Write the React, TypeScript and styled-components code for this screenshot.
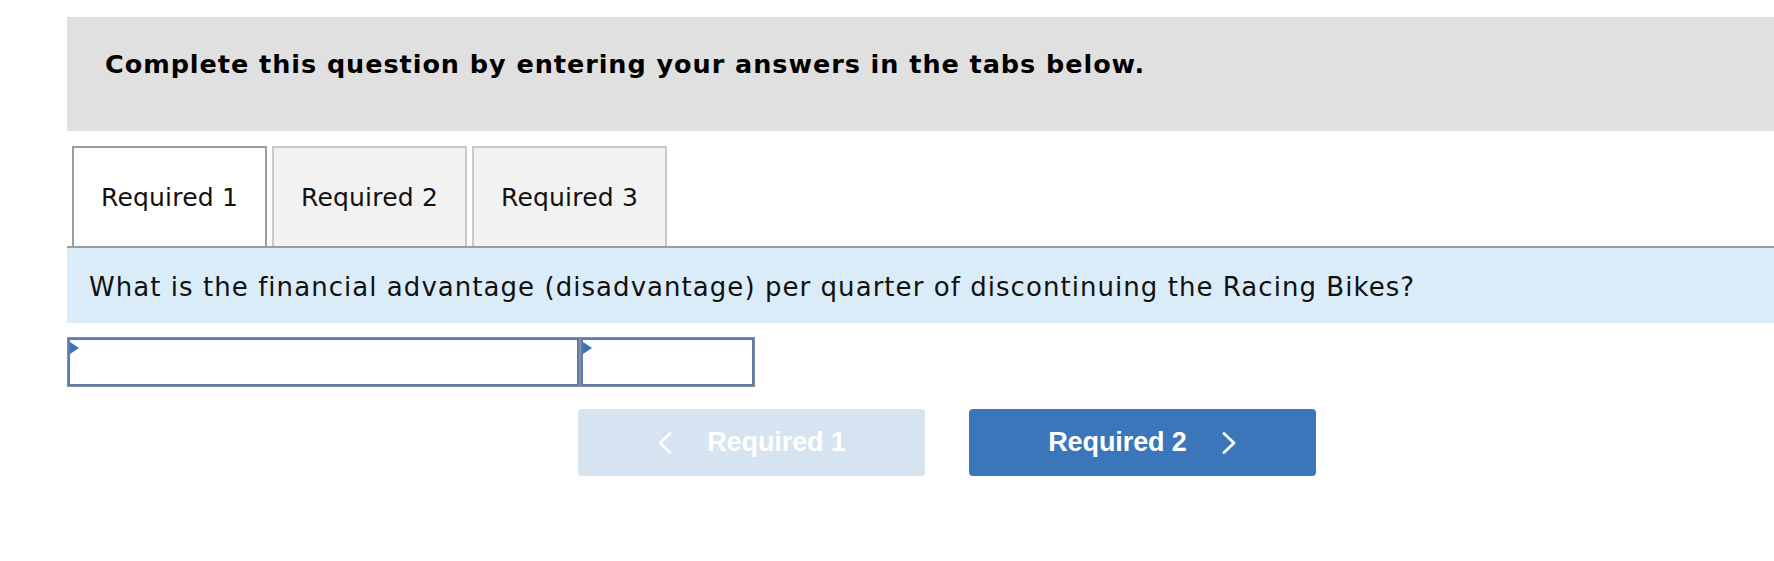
import React from "react";
import styled, { createGlobalStyle } from "styled-components";

const GlobalStyle = createGlobalStyle`
  html, body {
    margin: 0;
    padding: 0;
    background: #ffffff;
  }
  body {
    font-family: "DejaVu Sans", Verdana, sans-serif;
    color: #111111;
  }
`;

const Page = styled.div`
  padding: 17px 0 0 67px;
  width: 100%;
  box-sizing: border-box;
  overflow: hidden;
`;

const Instructions = styled.div`
  height: 114px;
  box-sizing: border-box;
  background: #e0e0e0;
  padding: 32px 0 0 38px;
  font-size: 25.5px;
  font-weight: bold;
  letter-spacing: 0.95px;
  line-height: 30px;
  color: #000;
`;

const TabRow = styled.div`
  display: flex;
  gap: 5px;
  margin-top: 15px;
  padding-left: 5px;
  border-bottom: 2px solid #9d9d9d;
`;

const Tab = styled.div<{ $active?: boolean }>`
  width: 195px;
  height: 100px;
  box-sizing: border-box;
  display: flex;
  align-items: center;
  justify-content: center;
  font-size: 25px;
  letter-spacing: 0.2px;
  color: #111;
  background: ${(p) => (p.$active ? "#ffffff" : "#f2f2f2")};
  border: 2px solid ${(p) => (p.$active ? "#9d9d9d" : "#c8c8c8")};
  border-bottom: none;
`;

const QuestionBand = styled.div`
  height: 75px;
  box-sizing: border-box;
  background: #dbecf9;
  display: flex;
  align-items: center;
  padding: 2px 0 0 22px;
  font-size: 26px;
  letter-spacing: 1.05px;
  color: #111;
`;

const InputRow = styled.div`
  display: flex;
  margin-top: 14px;
`;

const Cell = styled.div<{ $width: number }>`
  position: relative;
  width: ${(p) => p.$width}px;
  height: 50px;
  box-sizing: border-box;
  border: 3px solid #5b7dae;
  outline: 1px solid #8a8f99;
  outline-offset: -1px;
  background: #fff;
`;

const Marker = styled.span`
  position: absolute;
  left: 0;
  top: 2px;
  width: 0;
  height: 0;
  border-top: 6px solid transparent;
  border-bottom: 6px solid transparent;
  border-left: 9px solid #3b73b9;
`;

const NavRow = styled.div`
  display: flex;
  gap: 44px;
  margin: 22px 0 0 511px;
`;

const NavButton = styled.button<{ $disabled?: boolean }>`
  width: 347px;
  height: 67px;
  border: none;
  border-radius: 4px;
  display: flex;
  align-items: center;
  justify-content: center;
  gap: 35px;
  padding: 0;
  background: ${(p) => (p.$disabled ? "#d6e3f1" : "#3a76b9")};
  color: #fff;
  font-family: "Liberation Sans", Arial, sans-serif;
  font-weight: bold;
  font-size: 27px;
  letter-spacing: -0.1px;
  cursor: ${(p) => (p.$disabled ? "default" : "pointer")};
`;

const Chevron = ({ dir }: { dir: "left" | "right" }) => (
  <svg width="15" height="22" viewBox="0 0 15 22">
    <polyline
      points={dir === "left" ? "13,1.5 3,11 13,20.5" : "2,1.5 12,11 2,20.5"}
      fill="none"
      stroke="#fff"
      strokeWidth="2.8"
      strokeLinecap="round"
      strokeLinejoin="round"
    />
  </svg>
);

const App = () => {
  const tabs = ["Required 1", "Required 2", "Required 3"];
  return (
    <>
      <GlobalStyle />
      <Page>
        <Instructions>
          Complete this question by entering your answers in the tabs below.
        </Instructions>
        <TabRow>
          {tabs.map((t, i) => (
            <Tab key={t} $active={i === 0}>
              {t}
            </Tab>
          ))}
        </TabRow>
        <QuestionBand>
          What is the financial advantage (disadvantage) per quarter of
          discontinuing the Racing Bikes?
        </QuestionBand>
        <InputRow>
          <Cell $width={513}>
            <Marker />
          </Cell>
          <Cell $width={175}>
            <Marker />
          </Cell>
        </InputRow>
        <NavRow>
          <NavButton $disabled>
            <Chevron dir="left" />
            <span>Required 1</span>
          </NavButton>
          <NavButton>
            <span>Required 2</span>
            <Chevron dir="right" />
          </NavButton>
        </NavRow>
      </Page>
    </>
  );
};

export default App;
